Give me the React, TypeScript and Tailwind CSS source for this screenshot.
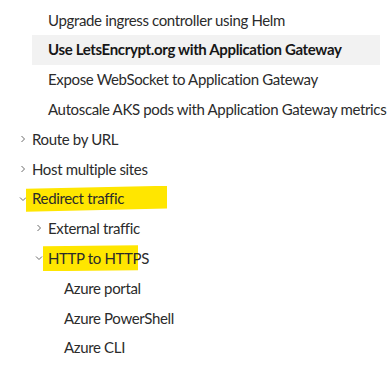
import React from 'react'

type Row = {
  label: string
  level: number
  chevron?: 'right' | 'down'
  selected?: boolean
  mark?: string
}

const rows: Row[] = [
  { label: 'Upgrade ingress controller using Helm', level: 2 },
  { label: 'Use LetsEncrypt.org with Application Gateway', level: 2, selected: true },
  { label: 'Expose WebSocket to Application Gateway', level: 2 },
  { label: 'Autoscale AKS pods with Application Gateway metrics', level: 2 },
  { label: 'Route by URL', level: 1, chevron: 'right' },
  { label: 'Host multiple sites', level: 1, chevron: 'right' },
  { label: 'Redirect traffic', level: 1, chevron: 'down', mark: 'left-[-6px] w-[141px] [clip-path:polygon(0_12%,100%_0,100%_88%,0_100%)]' },
  { label: 'External traffic', level: 2, chevron: 'right' },
  { label: 'HTTP to HTTPS', level: 2, chevron: 'down', mark: 'left-[-5px] w-[95px] [clip-path:polygon(0_4%,100%_0,100%_96%,0_100%)]' },
  { label: 'Azure portal', level: 3 },
  { label: 'Azure PowerShell', level: 3 },
  { label: 'Azure CLI', level: 3 },
]

const pad: Record<number, string> = { 1: 'pl-[32px]', 2: 'pl-[48px]', 3: 'pl-[64px]' }

function Chevron({ dir }: { dir: 'right' | 'down' }) {
  return (
    <svg width="8" height="8" viewBox="0 0 8 8" className="absolute left-[-13px] top-1/2 -translate-y-1/2 text-[#6b6b6b]">
      {dir === 'right' ? (
        <path d="M2.5 1 L5.5 4 L2.5 7" fill="none" stroke="currentColor" strokeWidth="1" />
      ) : (
        <path d="M1 2.5 L4 5.5 L7 2.5" fill="none" stroke="currentColor" strokeWidth="1" />
      )}
    </svg>
  )
}

export default function App() {
  return (
    <div className="w-[390px] h-[367px] bg-white overflow-hidden pt-[5px] text-[15px] tracking-[-0.35px]" style={{ fontFamily: '"Segoe UI", Lato, sans-serif' }}>
      {rows.map((r) => (
        <div key={r.label}
          className={`h-[29.8px] flex items-center ${pad[r.level]} ${r.selected ? 'bg-[#f2f2f2] ml-[32px] !pl-[16px] mr-[10px] font-bold text-[#171717]' : 'text-[#2b2b2b]'}`}>
          <span className="relative flex items-center">
            {r.chevron && <Chevron dir={r.chevron} />}
            {r.mark && <span className={`absolute top-1/2 -translate-y-1/2 h-[26px] bg-[#ffe600] ${r.mark}`} />}
            <span className="relative whitespace-nowrap">{r.label}</span>
          </span>
        </div>
      ))}
    </div>
  )
}
